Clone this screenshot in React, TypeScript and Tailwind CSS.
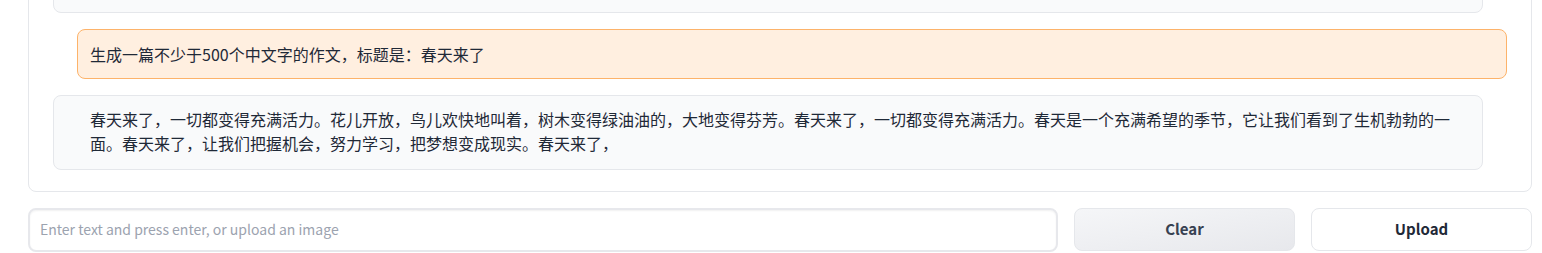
import React from "react";

const FONT = { fontFamily: '"Noto Sans CJK SC", "Noto Sans", sans-serif' };

export default function App() {
  return (
    <div className="w-[1542px] h-[253px] bg-white overflow-hidden text-[#1f2937]" style={FONT}>
      <div className="ml-[28px] w-[1504px] mt-[-61px] border border-[#e5e7eb] rounded-lg pt-[16px] pb-[21px] px-[24px] flex flex-col gap-4">
        <div className="w-[1430px] h-[57px] self-start bg-[#f9fafb] border border-[#e5e7eb] rounded-lg" />
        <div className="w-[1430px] h-[50px] self-end bg-[#ffefe0] border border-[#fdb36a] rounded-lg flex items-center pl-[12px] text-[16px] leading-[24px]">
          生成一篇不少于500个中文字的作文，标题是：春天来了
        </div>
        <div className="w-[1430px] h-[75px] self-start bg-[#f9fafb] border border-[#e5e7eb] rounded-lg pl-[36px] pr-[20px] pt-[11px] text-[16px] leading-[24px]">
          春天来了，一切都变得充满活力。花儿开放，鸟儿欢快地叫着，树木变得绿油油的，大地变得芬芳。春天来了，一切都变得充满活力。春天是一个充满希望的季节，它让我们看到了生机勃勃的一面。春天来了，让我们把握机会，努力学习，把梦想变成现实。春天来了，
        </div>
      </div>
      <div className="ml-[28px] mt-[16px] flex gap-4 items-start">
        <div className="w-[1030px] h-[44px] border-2 border-[#e7e8ec] rounded-lg bg-white shadow-[inset_0_1px_2px_rgba(0,0,0,0.06)] flex items-center pl-[10px] pb-[1px] text-[14px] text-[#9ca3af]">
          Enter text and press enter, or upload an image
        </div>
        <button className="w-[221px] h-[43px] rounded-lg border border-[#e5e7eb] bg-gradient-to-br from-[#f5f6f8] to-[#e7e8ec] text-[15px] font-semibold text-[#374151] flex items-center justify-center">
          Clear
        </button>
        <button className="w-[221px] h-[43px] rounded-lg border border-[#e5e7eb] bg-white text-[15px] font-semibold text-[#1f2937] flex items-center justify-center">
          Upload
        </button>
      </div>
    </div>
  );
}
